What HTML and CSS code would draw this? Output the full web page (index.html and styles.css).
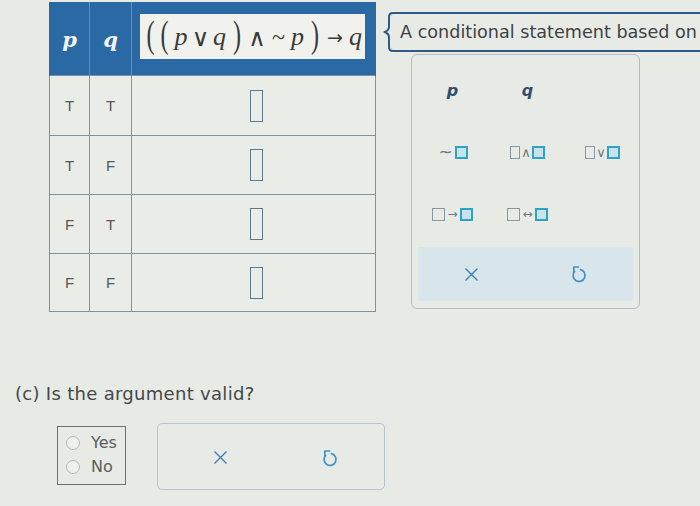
FILE: index.html
```html
<!DOCTYPE html>
<html>
<head>
<meta charset="utf-8">
<link rel="stylesheet" href="styles.css">
</head>
<body>
<div class="top">
  <table class="truth">
    <tr class="head">
      <th class="c-p"><span class="var">p</span></th>
      <th class="c-q"><span class="var">q</span></th>
      <th class="c-f">
        <div class="formula"><span class="bp">(</span><span class="bp">(</span><span class="it">p</span><span class="op">∨</span><span class="it">q</span><span class="bp">)</span><span class="op">∧</span><span class="tilde">~</span><span class="it">p</span><span class="bp">)</span><span class="arrow">→</span><span class="it">q</span></div>
      </th>
    </tr>
    <tr class="r1"><td>T</td><td>T</td><td><span class="slot"></span></td></tr>
    <tr class="r2"><td>T</td><td>F</td><td><span class="slot"></span></td></tr>
    <tr class="r3"><td>F</td><td>T</td><td><span class="slot"></span></td></tr>
    <tr class="r4"><td>F</td><td>F</td><td><span class="slot"></span></td></tr>
  </table>

  <div class="side">
    <div class="bubble">
      <svg class="brace" width="12" height="40" viewBox="0 0 12 40">
        <path d="M12 1 H10 Q6 1 6 5 V15 Q6 18 2 20 Q6 22 6 25 V35 Q6 39 10 39 H12" fill="none" stroke="#2d5b86" stroke-width="2"/>
      </svg>
      <div class="bubble-body">A conditional statement based on</div>
    </div>
    <div class="panel">
      <div class="keys">
        <span class="key var-key">p</span>
        <span class="key var-key">q</span>
        <span class="key"></span>
        <span class="key"><span class="opk tl">~</span><span class="sq t"></span></span>
        <span class="key"><span class="sq n"></span><span class="opk">∧</span><span class="sq t"></span></span>
        <span class="key"><span class="sq n"></span><span class="opk">∨</span><span class="sq t"></span></span>
        <span class="key"><span class="sq"></span><span class="opk sm">→</span><span class="sq t"></span></span>
        <span class="key"><span class="sq"></span><span class="opk sm">↔</span><span class="sq t"></span></span>
      </div>
      <div class="actions">
        <span class="act">
          <svg width="15" height="15" viewBox="0 0 15 15"><path d="M1.5 1.5 L13.5 13.5 M13.5 1.5 L1.5 13.5" stroke="#3d7fb8" stroke-width="1.4" fill="none"/></svg>
        </span>
        <span class="act">
          <svg width="18" height="20" viewBox="0 0 18 20"><path d="M4.6 7.4 A6 6 0 1 0 10.5 5.6" stroke="#3f93c8" stroke-width="1.7" fill="none" stroke-linecap="round"/><path d="M8.5 3 H3.8 V7.6" stroke="#3f93c8" stroke-width="1.7" fill="none" stroke-linejoin="round" stroke-linecap="round"/></svg>
        </span>
      </div>
    </div>
  </div>
</div>

<p class="question">(c) Is the argument valid?</p>

<div class="answer">
  <div class="radios">
    <label class="radio"><span class="dot"></span>Yes</label>
    <label class="radio"><span class="dot"></span>No</label>
  </div>
  <div class="btns">
    <span class="act">
      <svg width="15" height="15" viewBox="0 0 15 15"><path d="M1.5 1.5 L13.5 13.5 M13.5 1.5 L1.5 13.5" stroke="#3d7fb8" stroke-width="1.4" fill="none"/></svg>
    </span>
    <span class="act">
      <svg width="18" height="20" viewBox="0 0 18 20"><path d="M4.6 7.4 A6 6 0 1 0 10.5 5.6" stroke="#3f93c8" stroke-width="1.7" fill="none" stroke-linecap="round"/><path d="M8.5 3 H3.8 V7.6" stroke="#3f93c8" stroke-width="1.7" fill="none" stroke-linejoin="round" stroke-linecap="round"/></svg>
    </span>
  </div>
</div>
</body>
</html>
```

FILE: styles.css
```css
html, body {
  margin: 0;
  padding: 0;
}
body {
  width: 700px;
  height: 506px;
  overflow: hidden;
  background: #e7eae5;
  font-family: "DejaVu Sans", Verdana, sans-serif;
  color: #4a4d50;
}

.top {
  display: flex;
  align-items: flex-start;
  padding: 2px 0 0 49px;
}

/* truth table */
.truth {
  width: 327px;
  border-collapse: collapse;
  table-layout: fixed;
  background: #e9ece7;
}
.truth .c-p { width: 39px; }
.truth .c-q { width: 41px; }
.truth th {
  background: #2b69a5;
  height: 72px;
  padding: 0;
  border-left: 1px solid #5d8fc2;
  border-right: 1px solid #5d8fc2;
  border-top: 1px solid #2b69a5;
}
.truth th:first-child { border-left: 1px solid #2b69a5; }
.truth th:last-child { border-right: 1px solid #2b69a5; }
.var {
  font-family: "DejaVu Serif", "Liberation Serif", serif;
  font-style: italic;
  font-weight: bold;
  font-size: 21px;
  color: #f2f5f8;
}
.c-f { text-align: left; }
.formula {
  margin: -5px 0 0 8px;
  width: 225px;
  height: 45px;
  box-sizing: border-box;
  background: #f1f1ee;
  font-family: "Liberation Serif", "DejaVu Serif", serif;
  font-weight: normal;
  color: #3a3a3a;
  font-size: 26px;
  line-height: 30px;
  display: flex;
  align-items: center;
  padding-left: 4px;
  white-space: nowrap;
}
.formula > span {
  display: inline-block;
  text-align: center;
  flex: none;
}
.formula > span:nth-child(1) { width: 13px; }
.formula > span:nth-child(2) { width: 15px; }
.formula > span:nth-child(3) { width: 18px; }
.formula > span:nth-child(4) { width: 21px; }
.formula > span:nth-child(5) { width: 17px; }
.formula > span:nth-child(6) { width: 18px; }
.formula > span:nth-child(7) { width: 22px; }
.formula > span:nth-child(8) { width: 21px; }
.formula > span:nth-child(9) { width: 17px; }
.formula > span:nth-child(10) { width: 18px; }
.formula > span:nth-child(11) { width: 22px; }
.formula > span:nth-child(12) { width: 19px; }
.it { font-style: italic; }
.bp {
  font-size: 37px;
  line-height: 40px;
  transform: scaleX(0.65);
  margin-top: -3px;
}
.op { font-family: "DejaVu Sans", sans-serif; font-size: 24px; margin-top: 2px; }
.tilde { font-size: 24px; }
.arrow { font-family: "DejaVu Sans", sans-serif; font-size: 19px; margin-top: 1px; }

.truth td {
  border: 1px solid #7a93a6;
  text-align: center;
  font-family: "Liberation Sans", Arial, sans-serif;
  font-size: 15px;
  color: #55585a;
  padding: 0;
}
.r1 td { height: 59px; }
.r2 td { height: 58px; }
.r3 td { height: 58px; }
.r4 td { height: 57px; }
.slot {
  display: inline-block;
  width: 11px;
  height: 30px;
  border: 1.5px solid #5f7a8e;
  vertical-align: middle;
  margin-left: 5px;
}

/* right side */
.side {
  margin-left: 7px;
  flex: 1;
  min-width: 0;
}
.bubble {
  display: flex;
  margin-top: 10px;
  height: 40px;
}
.brace { flex: none; display: block; }
.bubble-body {
  flex: 1;
  min-width: 0;
  overflow: hidden;
  border: 2px solid #2d5b86;
  border-left: none;
  border-right: none;
  height: 36px;
  line-height: 36px;
  white-space: nowrap;
  font-size: 17.6px;
  color: #3e4245;
  padding-left: 5px;
}

.panel {
  margin: 2px 0 0 28px;
  width: 229px;
  height: 255px;
  box-sizing: border-box;
  border: 1px solid #aebfca;
  border-radius: 6px;
  display: flex;
  flex-direction: column;
}
.keys {
  display: grid;
  grid-template-columns: repeat(3, 75px);
  grid-template-rows: 20px 20px 20px;
  row-gap: 42px;
  padding: 25px 0 0 3px;
}
.key {
  display: flex;
  align-items: center;
  justify-content: center;
}
.var-key {
  font-family: "DejaVu Sans", sans-serif;
  font-style: italic;
  font-weight: bold;
  font-size: 16px;
  color: #2f4f6e;
}
.sq {
  display: inline-block;
  width: 11px;
  height: 11px;
  border: 1.5px solid #8797a6;
}
.sq.n { width: 8px; height: 11px; }
.sq.t {
  width: 9px;
  height: 9px;
  border: 2.5px solid #2ea3c6;
  background: #c9e3ea;
}
.opk {
  font-size: 13px;
  color: #6b7a88;
  margin: 0 1px;
}
.opk.tl { font-size: 17px; margin-right: 2px; }
.opk.sm { font-size: 12px; margin: 0 2px; }

.actions {
  margin: auto 6px 7px;
  height: 54px;
  background: #d8e5ea;
  display: flex;
  border-radius: 0 0 4px 4px;
}
.act {
  flex: 1;
  display: flex;
  align-items: center;
  justify-content: center;
}

/* question */
.question {
  margin: 71px 0 0 15px;
  font-size: 18px;
  letter-spacing: 0.3px;
  line-height: 22px;
  color: #45484b;
}
.answer {
  display: flex;
  align-items: flex-start;
  padding-left: 57px;
  margin-top: 18px;
}
.radios {
  margin-top: 3px;
  width: 69px;
  height: 59px;
  box-sizing: border-box;
  border: 1px solid #6e7072;
  padding: 5px 0 0 8px;
  display: flex;
  flex-direction: column;
  gap: 2px;
}
.radio {
  display: flex;
  align-items: center;
  font-family: "DejaVu Sans", sans-serif;
  font-size: 16px;
  line-height: 22px;
  color: #5a5d60;
}
.dot {
  width: 12px;
  height: 12px;
  border: 1px solid #b5b9bc;
  border-radius: 50%;
  margin-right: 11px;
  background: #eef0ed;
}
.btns {
  margin-left: 31px;
  width: 228px;
  height: 67px;
  box-sizing: border-box;
  border: 1px solid #b3c5d0;
  border-radius: 5px;
  display: flex;
  padding: 2px 0 0 8px;
}
```
